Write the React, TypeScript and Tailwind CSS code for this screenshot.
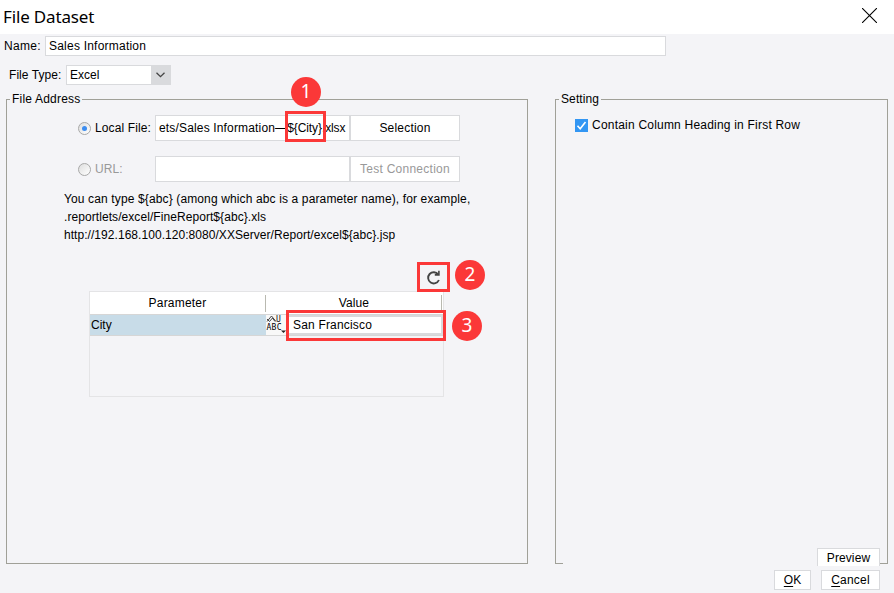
import React, { useState } from 'react';
import clsx from 'clsx';

interface BadgeProps {
  value: number;
  className: string;
}

const Badge: React.FC<BadgeProps> = ({ value, className }) => (
  <div
    className={clsx(
      'absolute z-10 flex h-[30px] w-[30px] items-center justify-center rounded-full bg-[#fb3838] font-["Noto_Sans"] text-[19px] leading-none text-white',
      className
    )}
  >
    <span className="-mt-[2px]">{value}</span>
  </div>
);

interface GroupProps {
  title: string;
  className?: string;
  titleClass?: string;
  children: React.ReactNode;
}

const Group: React.FC<GroupProps> = ({ title, className, titleClass, children }) => (
  <section className={clsx('relative h-[465px] border border-[#a0a098]', className)}>
    <h2 className={clsx('absolute -top-[9px] left-[3px] bg-[#f4f4f7] px-[2px] leading-4', titleClass)}>{title}</h2>
    {children}
  </section>
);

interface RadioProps {
  checked: boolean;
  onSelect: () => void;
}

const Radio: React.FC<RadioProps> = ({ checked, onSelect }) => (
  <button
    role="radio"
    aria-checked={checked}
    onClick={onSelect}
    className="mr-1 flex h-[13px] w-[13px] items-center justify-center rounded-full border border-[#a8a8a8] bg-gradient-to-br from-[#dedede] to-white"
  >
    {checked && <span className="h-[5px] w-[5px] rounded-full bg-[#3d8df0]" />}
  </button>
);

const App: React.FC = () => {
  const [source, setSource] = useState('local');

  return (
    <div className='flex h-[593px] w-[894px] flex-col overflow-hidden bg-[#f4f4f7] font-["Liberation_Sans",Arial,sans-serif] text-[12px] leading-4 whitespace-nowrap text-black'>
      <header className="flex h-[34px] shrink-0 justify-between bg-white pr-[17px] pl-[3px]">
        <h1 className='font-["Noto_Sans",sans-serif] text-[17px] leading-[33px] tracking-[-0.15px]'>File Dataset</h1>
        <svg width="15" height="15" viewBox="0 0 15 15" className="mt-2" stroke="#000" strokeWidth="1.1">
          <path d="M0 0L15 15M15 0L0 15" />
        </svg>
      </header>

      <div className="mt-[2px] flex h-5 shrink-0 items-center pl-1">
        <span className="w-[41px] tracking-[0.3px]">Name:</span>
        <div className="flex h-5 w-[621px] items-center border border-[#d9dadd] bg-white pl-[3px] tracking-[0.22px]">
          Sales Information
        </div>
      </div>

      <div className="mt-[9px] flex h-5 shrink-0 items-center pl-[9px]">
        <span className="w-[57px] tracking-[0.05px]">File Type:</span>
        <div className="flex h-5 w-[105px] border border-[#d9dadd] bg-white">
          <span className="flex flex-1 items-center pl-[3px]">Excel</span>
          <span className="flex w-[19px] items-center justify-center bg-[#d9dadd]">
            <svg width="9" height="6" viewBox="0 0 9 6" fill="none" stroke="#444" strokeWidth="1.3">
              <path d="M0.5 0.7L4.5 4.7L8.5 0.7" />
            </svg>
          </span>
        </div>
      </div>

      <main className="mt-[14px] flex shrink-0 gap-[27px] pl-[6px]">
        <Group title="File Address" className="w-[522px]" titleClass="tracking-[0.2px]">
          <Badge value={1} className="-top-[23px] left-[284px]" />
          <div className="relative mt-[15px] flex h-[26px] items-center pl-[71px]">
            <Radio checked={source === 'local'} onSelect={() => setSource('local')} />
            <span className="w-[60px] tracking-[0.12px]">Local File:</span>
            <div className="flex h-[26px] w-[195px] items-center border border-[#d9dadd] bg-white pl-[3px]">
              <span className="tracking-[0.16px]">ets/Sales Information—</span>
              <span className="tracking-[-0.1px]">${'{City}'}.xlsx</span>
            </div>
            <button className="h-[26px] w-[110px] border border-[#d9dadd] bg-white tracking-[0.2px]">Selection</button>
            <div className="absolute -top-1 left-[278px] h-[31px] w-[41px] border-3 border-[#fb3838]" />
          </div>

          <div className="mt-[15px] flex h-[26px] items-center pl-[71px] text-[#999]">
            <Radio checked={source === 'url'} onSelect={() => setSource('url')} />
            <span className="w-[60px] tracking-[0.1px]">URL:</span>
            <div className="h-[26px] w-[195px] border border-[#d9dadd] bg-white" />
            <button className="h-[26px] w-[110px] border border-[#d9dadd] bg-white tracking-[0.25px]">
              Test Connection
            </button>
          </div>

          <div className="mt-[8px] ml-[57px] leading-[18px]">
            <p className="tracking-[0.13px]">You can type ${'{abc}'} (among which abc is a parameter name), for example,</p>
            <p className="tracking-[0.07px]">.reportlets/excel/FineReport${'{abc}'}.xls</p>
            <p className="tracking-[0.05px]">http://192.168.100.120:8080/XXServer/Report/excel${'{abc}'}.jsp</p>
          </div>

          <div className="relative mt-[18px] ml-[410px] flex h-[30px] w-[33px] items-center justify-center border-3 border-[#fb3838]">
            <svg width="15" height="15" viewBox="0 0 15 15" fill="none" stroke="#444" strokeWidth="1.9">
              <path d="M12.2 4.4A5.6 5.6 0 1 0 12.9 10" />
              <path d="M12.9 0.8V4.9H8.8" strokeWidth="1.6" />
            </svg>
            <Badge value={2} className="-top-[5px] left-[35px]" />
          </div>

          <div className="-mt-px ml-[82px] h-[106px] w-[355px] border border-[#e4e4e6]">
            <div className="flex h-[22px] items-center bg-white leading-[22px]">
              <span className="w-[175px] text-center tracking-[0.2px]">Parameter</span>
              <span className="h-[17px] w-px bg-[#b9b9b0]" />
              <span className="w-[175px] pl-px text-center tracking-[0.1px]">Value</span>
              <span className="h-[17px] w-px bg-[#b9b9b0]" />
            </div>
            <div className="relative flex h-[22px] border-t border-b border-[#d6d6d6]">
              <span className="w-[176px] bg-[#c8dce8] pl-px leading-5">City</span>
              <svg width="21" height="20" viewBox="0 0 21 20" className="bg-[#f8f8f8]">
                <path d="M1 6.5L5.5 1L10 6.5M3.5 6.5L6.5 3L9 6.5M1 4L3.5 6.5" fill="none" stroke="#333" strokeWidth="0.9" />
                <text x="10" y="6.5" fontSize="8" fontFamily="DejaVu Sans Mono" fill="#111">U</text>
                <text x="0.5" y="15" fontSize="8" fontFamily="DejaVu Sans Mono" fill="#000" textLength="15">ABC</text>
                <path d="M15 15.5H20L17.5 18Z" fill="#222" />
              </svg>
              <div className="flex flex-1 items-center border-2 border-[#d9dadd] bg-white pl-[4px] tracking-[0.18px]">
                San Francisco
              </div>
              <div className="absolute -top-[5px] left-[196px] h-[31px] w-[160px] border-3 border-[#fb3838]" />
              <Badge value={3} className="-top-[4px] left-[362px]" />
            </div>
          </div>
        </Group>

        <Group title="Setting" className="w-[333px]" titleClass="tracking-[0.1px]">
          <label className="mt-[17px] ml-[19px] flex items-center">
            <span className="mr-1 flex h-[13px] w-[13px] items-center justify-center bg-[#3296f3]">
              <svg width="11" height="11" viewBox="0 0 11 11" fill="none" stroke="#fff" strokeWidth="1.6">
                <path d="M1.5 5.8L4.2 8.8L9.5 2" />
              </svg>
            </span>
            <span className="tracking-[0.21px]">Contain Column Heading in First Row</span>
          </label>
          {/* the preview strip hides most of the bottom edge */}
          <div className="absolute -bottom-[3px] left-[7px] flex h-[18px] w-[317px] justify-end bg-[#f4f4f7]">
            <button className="w-[63px] border border-b-0 border-[#d9dadd] bg-white tracking-[0.1px]">Preview</button>
          </div>
        </Group>
      </main>

      <footer className="mt-[6px] flex h-5 shrink-0 justify-end gap-[10px] pr-[14px]">
        <button className="w-[37px] border border-[#d9dadd] bg-white leading-[18px]">
          <u className="underline-offset-2">O</u>K
        </button>
        <button className="w-[59px] border border-[#d9dadd] bg-white leading-[18px] tracking-[0.2px]">
          <u className="underline-offset-2">C</u>ancel
        </button>
      </footer>
    </div>
  );
};

export default App;
